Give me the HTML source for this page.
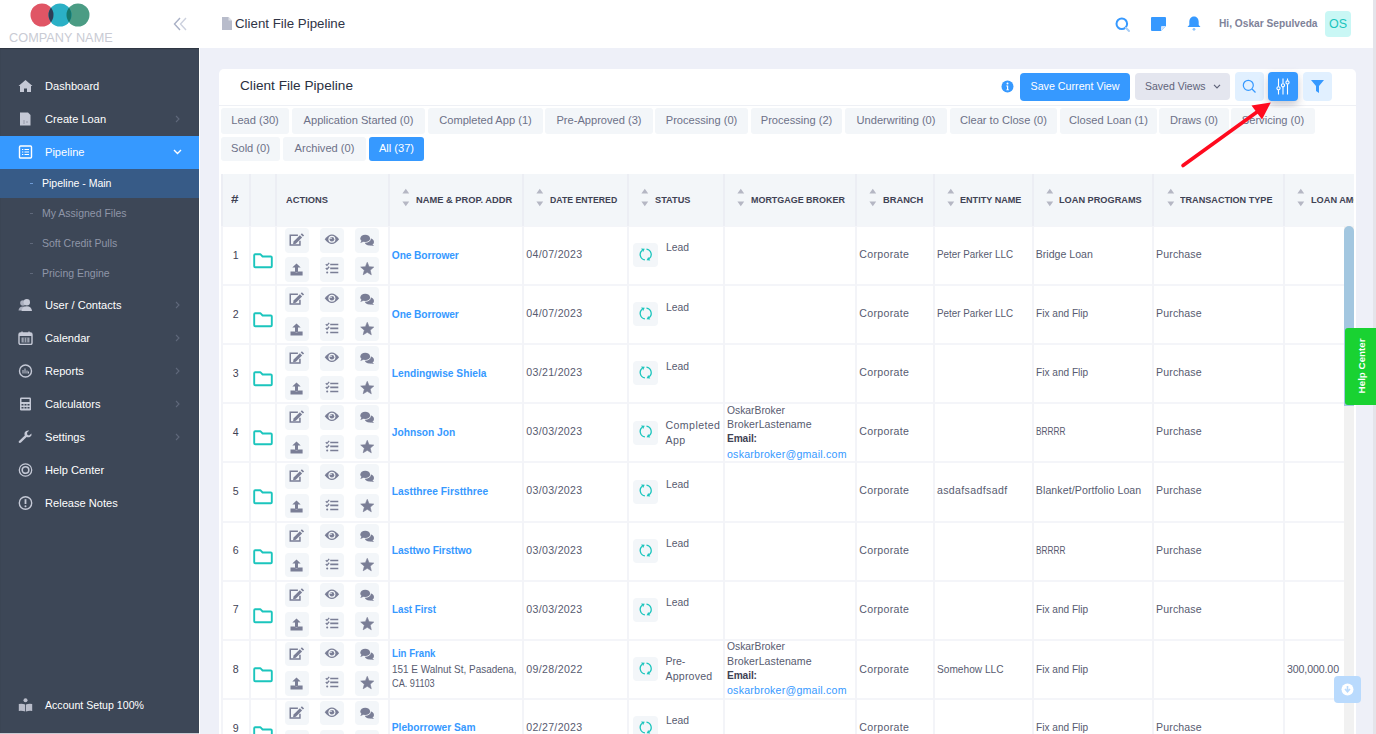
<!DOCTYPE html><html><head><meta charset="utf-8"><style>
*{box-sizing:border-box;margin:0;padding:0}
html,body{width:1376px;height:734px;overflow:hidden;background:#eef0f8;font-family:"Liberation Sans",sans-serif}
.abs{position:absolute}
.t{position:absolute;white-space:nowrap;line-height:1}
svg{display:block}
</style></head><body>
<div class="abs" style="left:0;top:0;width:1376px;height:48px;background:#fff"></div>
<svg class="abs" style="left:0;top:0" width="130" height="48" viewBox="0 0 130 48">
<defs><clipPath id="cr"><circle cx="42" cy="15" r="11.5"/></clipPath><clipPath id="cg"><circle cx="78" cy="15" r="11.5"/></clipPath></defs>
<circle cx="42" cy="15" r="11.5" fill="#e05565"/>
<circle cx="78" cy="15" r="11.5" fill="#4b9c84"/>
<circle cx="60" cy="15" r="11.5" fill="#2bb0c6"/>
<circle cx="60" cy="15" r="11.5" fill="#2e3c55" clip-path="url(#cr)"/>
<circle cx="60" cy="15" r="11.5" fill="#17786c" clip-path="url(#cg)"/>
</svg>
<div class="t" style="left:9px;top:32.2px;font-size:12.7px;color:#c9cbd4;letter-spacing:0.05px">COMPANY NAME</div>
<svg class="abs" style="left:173px;top:17px" width="16" height="14" viewBox="0 0 16 14">
<path d="M7 1 L1.5 7 L7 13" fill="none" stroke="#a9b0c6" stroke-width="1.4"/>
<path d="M13 1 L7.5 7 L13 13" fill="none" stroke="#ccd1de" stroke-width="1.4"/></svg>
<svg class="abs" style="left:222px;top:17px" width="10" height="13" viewBox="0 0 10 13">
<path d="M0 0 H6.5 L10 3.5 V13 H0 Z" fill="#b8bccb"/><path d="M6.5 0 V3.5 H10" fill="#dfe1e8"/></svg>
<div class="t" style="left:235px;top:17px;font-size:13.3px;color:#2f3446">Client File Pipeline</div>
<svg class="abs" style="left:1115px;top:17px" width="16" height="16" viewBox="0 0 16 16">
<circle cx="6.8" cy="6.8" r="5.3" fill="none" stroke="#3699ff" stroke-width="2"/>
<path d="M10.8 10.8 L14 14" stroke="#a8cdf5" stroke-width="2" stroke-linecap="round"/></svg>
<svg class="abs" style="left:1151px;top:17px" width="15" height="14" viewBox="0 0 15 14">
<path d="M1 0 H14 Q15 0 15 1 V9 L10 14 H1 Q0 14 0 13 V1 Q0 0 1 0 Z" fill="#3699ff"/>
<path d="M15 9 H11 Q10 9 10 10 V14 Z" fill="#cfe5ff"/></svg>
<svg class="abs" style="left:1187px;top:16px" width="14" height="15" viewBox="0 0 14 15">
<path d="M7 0.5 C3.8 0.5 2.3 3 2.3 6 V9 L0.5 11 H13.5 L11.7 9 V6 C11.7 3 10.2 0.5 7 0.5 Z" fill="#3699ff"/>
<circle cx="7" cy="13.3" r="1.4" fill="#8cc2fb"/></svg>
<div class="t" style="left:1219px;top:19px;font-size:10.2px;font-weight:bold;color:#7e8299">Hi, Oskar Sepulveda</div>
<div class="abs" style="left:1325px;top:11px;width:26px;height:26px;border-radius:4px;background:#c9f7f5"></div>
<div class="t" style="left:1325px;top:18px;width:26px;text-align:center;font-size:12.5px;color:#1bc5bd">OS</div>
<div class="abs" style="left:1373px;top:0;width:3px;height:734px;background:#e4e4ea"></div>
<div class="abs" style="left:0;top:48px;width:199px;height:685px;background:#3d4757;box-shadow:inset 0 1px 1px rgba(0,0,0,.25)"></div>
<div class="abs" style="left:199px;top:48px;width:1px;height:686px;background:#ffffff"></div>
<div class="abs" style="left:0;top:733px;width:199px;height:1px;background:#c9cbd3"></div>
<div class="abs" style="left:0;top:136px;width:199px;height:33px;background:#3699ff"></div>
<div class="abs" style="left:0;top:169px;width:199px;height:29px;background:#375b87"></div>
<div class="t" style="left:45px;top:80.7px;font-size:11.1px;color:#ffffff">Dashboard</div>
<svg class="abs" style="left:18px;top:79px" width="15" height="14" viewBox="0 0 15 14"><path d="M7.5 1 L0.5 7 L2 7 L2 13 H6 V9.5 H9 V13 H13 V7 L14.5 7 Z" fill="#c5c9d6"/></svg>
<div class="t" style="left:45px;top:113.7px;font-size:11.1px;color:#ffffff">Create Loan</div>
<svg class="abs" style="left:18px;top:112px" width="15" height="14" viewBox="0 0 15 14"><path d="M2 0.5 H10 L12.5 3 V13.5 H2 Z" fill="#c5c9d6"/><path d="M5 9 h2 M5 11 h2 M8 10 h2" stroke="#8a90a0" stroke-width="0.8"/></svg>
<svg class="abs" style="left:175px;top:115px" width="5" height="8" viewBox="0 0 5 8"><path d="M1 1 L4 4 L1 7" fill="none" stroke="#5f687a" stroke-width="1.1"/></svg>
<div class="t" style="left:45px;top:146.7px;font-size:11.1px;color:#ffffff">Pipeline</div>
<svg class="abs" style="left:18px;top:145px" width="15" height="14" viewBox="0 0 15 14"><rect x="1.5" y="1" width="12" height="12" rx="1" fill="none" stroke="#fff" stroke-width="1.4"/><path d="M4 4.5 h1.3 M6.5 4.5 h4.5 M4 7 h1.3 M6.5 7 h4.5 M4 9.5 h1.3 M6.5 9.5 h4.5" stroke="#fff" stroke-width="1.1"/></svg>
<svg class="abs" style="left:173px;top:149px" width="9" height="6" viewBox="0 0 9 6"><path d="M1 1 L4.5 4.5 L8 1" fill="none" stroke="#fff" stroke-width="1.4"/></svg>
<div class="abs" style="left:30px;top:183px;width:3px;height:1px;background:#6f9bd6"></div>
<div class="t" style="left:42px;top:177.7px;font-size:10.5px;color:#ffffff">Pipeline - Main</div>
<div class="abs" style="left:30px;top:213px;width:3px;height:1px;background:#5f687a"></div>
<div class="t" style="left:42px;top:207.7px;font-size:10.5px;color:#8f96a8">My Assigned Files</div>
<div class="abs" style="left:30px;top:243px;width:3px;height:1px;background:#5f687a"></div>
<div class="t" style="left:42px;top:237.7px;font-size:10.5px;color:#8f96a8">Soft Credit Pulls</div>
<div class="abs" style="left:30px;top:273px;width:3px;height:1px;background:#5f687a"></div>
<div class="t" style="left:42px;top:267.7px;font-size:10.5px;color:#8f96a8">Pricing Engine</div>
<div class="t" style="left:45px;top:299.7px;font-size:11.1px;color:#ffffff">User / Contacts</div>
<svg class="abs" style="left:18px;top:298px" width="15" height="14" viewBox="0 0 15 14"><circle cx="5" cy="5" r="2.8" fill="#a9aebd"/><path d="M0.5 12.5 Q1 8.5 5 8.5 Q9 8.5 9.5 12.5 Z" fill="#a9aebd"/><circle cx="8.8" cy="4.3" r="3.2" fill="#c5c9d6"/><path d="M3.5 13 Q4 8.3 8.8 8.3 Q13.6 8.3 14 13 Z" fill="#c5c9d6"/></svg>
<svg class="abs" style="left:175px;top:301px" width="5" height="8" viewBox="0 0 5 8"><path d="M1 1 L4 4 L1 7" fill="none" stroke="#5f687a" stroke-width="1.1"/></svg>
<div class="t" style="left:45px;top:332.7px;font-size:11.1px;color:#ffffff">Calendar</div>
<svg class="abs" style="left:18px;top:331px" width="15" height="14" viewBox="0 0 15 14"><rect x="1" y="2" width="13" height="11.5" rx="1.5" fill="none" stroke="#c5c9d6" stroke-width="1.4"/><rect x="1" y="2" width="13" height="3" fill="#c5c9d6"/><path d="M4 0.5 v3 M11 0.5 v3" stroke="#c5c9d6" stroke-width="1.3"/><path d="M3.5 6.5 h8 v5 h-8 z" fill="#c5c9d6" opacity=".7"/><path d="M6.2 6.5 v5 M8.8 6.5 v5" stroke="#3d4757" stroke-width="0.9"/></svg>
<svg class="abs" style="left:175px;top:334px" width="5" height="8" viewBox="0 0 5 8"><path d="M1 1 L4 4 L1 7" fill="none" stroke="#5f687a" stroke-width="1.1"/></svg>
<div class="t" style="left:45px;top:365.7px;font-size:11.1px;color:#ffffff">Reports</div>
<svg class="abs" style="left:18px;top:364px" width="15" height="14" viewBox="0 0 15 14"><circle cx="7.5" cy="7" r="6" fill="none" stroke="#c5c9d6" stroke-width="1.4"/><path d="M5 9.5 V6 M7 9.5 V4.5 M9 9.5 V6.5 M10.5 9.5 V7.5" stroke="#c5c9d6" stroke-width="1"/></svg>
<svg class="abs" style="left:175px;top:367px" width="5" height="8" viewBox="0 0 5 8"><path d="M1 1 L4 4 L1 7" fill="none" stroke="#5f687a" stroke-width="1.1"/></svg>
<div class="t" style="left:45px;top:398.7px;font-size:11.1px;color:#ffffff">Calculators</div>
<svg class="abs" style="left:18px;top:397px" width="15" height="14" viewBox="0 0 15 14"><rect x="2" y="0.5" width="11" height="13" rx="1.2" fill="#c5c9d6"/><rect x="3.5" y="2" width="8" height="3" fill="#3d4757"/><path d="M3.5 7 h2 v1.6 h-2z M6.5 7 h2 v1.6 h-2z M9.5 7 h2 v1.6 h-2z M3.5 10 h2 v1.6 h-2z M6.5 10 h2 v1.6 h-2z M9.5 10 h2 v1.6 h-2z" fill="#3d4757"/></svg>
<svg class="abs" style="left:175px;top:400px" width="5" height="8" viewBox="0 0 5 8"><path d="M1 1 L4 4 L1 7" fill="none" stroke="#5f687a" stroke-width="1.1"/></svg>
<div class="t" style="left:45px;top:431.7px;font-size:11.1px;color:#ffffff">Settings</div>
<svg class="abs" style="left:18px;top:430px" width="15" height="14" viewBox="0 0 15 14"><path d="M13.5 3.5 L11 5.5 L9.3 4.7 L9 2.8 L11.2 0.5 Q8 0 6.8 2.3 Q6 4 6.8 5.6 L0.8 11.3 Q0.2 12.5 1.5 13 Q2.3 13.3 3 12.6 L8.6 7 Q10.5 7.8 12.2 6.8 Q14 5.7 13.5 3.5 Z" fill="#c5c9d6"/></svg>
<svg class="abs" style="left:175px;top:433px" width="5" height="8" viewBox="0 0 5 8"><path d="M1 1 L4 4 L1 7" fill="none" stroke="#5f687a" stroke-width="1.1"/></svg>
<div class="t" style="left:45px;top:464.7px;font-size:11.1px;color:#ffffff">Help Center</div>
<svg class="abs" style="left:18px;top:463px" width="15" height="14" viewBox="0 0 15 14"><circle cx="7.5" cy="7" r="6.2" fill="none" stroke="#c5c9d6" stroke-width="1.3"/><circle cx="7.5" cy="7" r="3.3" fill="none" stroke="#c5c9d6" stroke-width="1.6"/></svg>
<div class="t" style="left:45px;top:497.7px;font-size:11.1px;color:#ffffff">Release Notes</div>
<svg class="abs" style="left:18px;top:496px" width="15" height="14" viewBox="0 0 15 14"><circle cx="7.5" cy="7" r="6.2" fill="none" stroke="#c5c9d6" stroke-width="1.4"/><path d="M7.5 3.2 V8" stroke="#c5c9d6" stroke-width="1.8"/><circle cx="7.5" cy="10.2" r="1" fill="#c5c9d6"/></svg>
<div class="t" style="left:45px;top:699.7px;font-size:10.6px;color:#ffffff">Account Setup 100%</div>
<svg class="abs" style="left:18px;top:698px" width="15" height="14" viewBox="0 0 15 14"><circle cx="7.5" cy="2.3" r="2" fill="#b9bdca"/><path d="M0.8 6 Q4 5.2 7.2 6.5 V13.5 Q4 12.5 0.8 13 Z M8 6.5 Q11 5.2 14.2 6 V13 Q11 12.5 8 13.5 Z" fill="#b9bdca"/></svg>
<div class="abs" style="left:219px;top:69px;width:1137px;height:670px;background:#fff;border-radius:5px"></div>
<div class="t" style="left:240px;top:79.3px;font-size:13.6px;color:#2a2f3f;letter-spacing:0.02px">Client File Pipeline</div>
<div class="abs" style="left:219px;top:105px;width:1137px;height:1px;background:#eef0f5"></div>
<svg class="abs" style="left:1001px;top:80px" width="13" height="13" viewBox="0 0 13 13">
<circle cx="6.5" cy="6.5" r="6" fill="#3699ff"/><circle cx="6.5" cy="3.6" r="1" fill="#fff"/><path d="M5.3 5.6 H7.2 V9.4 H8 V10.2 H5.2 V9.4 H6 V6.4 H5.3 Z" fill="#fff"/></svg>
<div class="abs" style="left:1020px;top:73px;width:110px;height:28px;background:#3699ff;border-radius:4px"></div>
<div class="t" style="left:1020px;top:81px;width:110px;text-align:center;font-size:10.7px;color:#fff">Save Current View</div>
<div class="abs" style="left:1135px;top:73px;width:95px;height:27px;background:#e4e6ef;border-radius:4px"></div>
<div class="t" style="left:1145px;top:81px;font-size:10.5px;color:#60647a">Saved Views</div>
<svg class="abs" style="left:1213px;top:84px" width="8" height="5" viewBox="0 0 8 5"><path d="M1 0.8 L4 3.8 L7 0.8" fill="none" stroke="#5e6278" stroke-width="1.2"/></svg>
<div class="abs" style="left:1235px;top:72px;width:29px;height:29px;background:#e1f0ff;border-radius:4px"></div>
<svg class="abs" style="left:1242px;top:79px" width="15" height="15" viewBox="0 0 15 15">
<circle cx="6.3" cy="6.3" r="5" fill="none" stroke="#3699ff" stroke-width="1.2"/><path d="M10 10 L13.5 13.5" stroke="#3699ff" stroke-width="1.3"/></svg>
<div class="abs" style="left:1268px;top:72px;width:30px;height:29px;background:#3699ff;border-radius:4px;box-shadow:0 4px 8px rgba(60,60,90,.28)"></div>
<svg class="abs" style="left:1276px;top:78px" width="14" height="17" viewBox="0 0 14 17">
<g stroke="#fff" stroke-width="1.1" fill="none">
<path d="M2.5 0.5 V8.5 M2.5 12 V16.5"/><circle cx="2.5" cy="10.3" r="1.6"/>
<path d="M7 0.5 V5.5 M7 9 V16.5"/><circle cx="7" cy="7.3" r="1.6"/>
<path d="M11.5 0.5 V2.8 M11.5 6.2 V16.5"/><circle cx="11.5" cy="4.5" r="1.6"/></g></svg>
<div class="abs" style="left:1303px;top:72px;width:29px;height:29px;background:#e1f0ff;border-radius:4px"></div>
<svg class="abs" style="left:1311px;top:80px" width="13" height="13" viewBox="0 0 13 13">
<path d="M0 0 H13 L8 6 V13 L5 11 V6 Z" fill="#3699ff"/></svg>
<div class="abs" style="left:221px;top:108px;width:68px;height:26px;background:#f3f6f9;border-radius:3px"></div>
<div class="t" style="left:221px;top:115.3px;width:68px;text-align:center;font-size:11.1px;color:#6d7188">Lead (30)</div>
<div class="abs" style="left:292px;top:108px;width:133px;height:26px;background:#f3f6f9;border-radius:3px"></div>
<div class="t" style="left:292px;top:115.3px;width:133px;text-align:center;font-size:11.1px;color:#6d7188">Application Started (0)</div>
<div class="abs" style="left:428px;top:108px;width:115px;height:26px;background:#f3f6f9;border-radius:3px"></div>
<div class="t" style="left:428px;top:115.3px;width:115px;text-align:center;font-size:11.1px;color:#6d7188">Completed App (1)</div>
<div class="abs" style="left:545px;top:108px;width:108px;height:26px;background:#f3f6f9;border-radius:3px"></div>
<div class="t" style="left:545px;top:115.3px;width:108px;text-align:center;font-size:11.1px;color:#6d7188">Pre-Approved (3)</div>
<div class="abs" style="left:655px;top:108px;width:93px;height:26px;background:#f3f6f9;border-radius:3px"></div>
<div class="t" style="left:655px;top:115.3px;width:93px;text-align:center;font-size:11.1px;color:#6d7188">Processing (0)</div>
<div class="abs" style="left:751px;top:108px;width:91px;height:26px;background:#f3f6f9;border-radius:3px"></div>
<div class="t" style="left:751px;top:115.3px;width:91px;text-align:center;font-size:11.1px;color:#6d7188">Processing (2)</div>
<div class="abs" style="left:845px;top:108px;width:102px;height:26px;background:#f3f6f9;border-radius:3px"></div>
<div class="t" style="left:845px;top:115.3px;width:102px;text-align:center;font-size:11.1px;color:#6d7188">Underwriting (0)</div>
<div class="abs" style="left:950px;top:108px;width:107px;height:26px;background:#f3f6f9;border-radius:3px"></div>
<div class="t" style="left:950px;top:115.3px;width:107px;text-align:center;font-size:11.1px;color:#6d7188">Clear to Close (0)</div>
<div class="abs" style="left:1060px;top:108px;width:97px;height:26px;background:#f3f6f9;border-radius:3px"></div>
<div class="t" style="left:1060px;top:115.3px;width:97px;text-align:center;font-size:11.1px;color:#6d7188">Closed Loan (1)</div>
<div class="abs" style="left:1159px;top:108px;width:70px;height:26px;background:#f3f6f9;border-radius:3px"></div>
<div class="t" style="left:1159px;top:115.3px;width:70px;text-align:center;font-size:11.1px;color:#6d7188">Draws (0)</div>
<div class="abs" style="left:1231px;top:108px;width:84px;height:26px;background:#f3f6f9;border-radius:3px"></div>
<div class="t" style="left:1231px;top:115.3px;width:84px;text-align:center;font-size:11.1px;color:#6d7188">Servicing (0)</div>
<div class="abs" style="left:221px;top:137px;width:59px;height:24px;background:#f3f6f9;border-radius:3px"></div>
<div class="t" style="left:221px;top:143.3px;width:59px;text-align:center;font-size:11.1px;color:#6d7188">Sold (0)</div>
<div class="abs" style="left:283px;top:137px;width:83px;height:24px;background:#f3f6f9;border-radius:3px"></div>
<div class="t" style="left:283px;top:143.3px;width:83px;text-align:center;font-size:11.1px;color:#6d7188">Archived (0)</div>
<div class="abs" style="left:369px;top:137px;width:55px;height:24px;background:#3699ff;border-radius:3px"></div>
<div class="t" style="left:369px;top:143.3px;width:55px;text-align:center;font-size:11.1px;color:#fff">All (37)</div>
<div class="abs" style="left:221px;top:174px;width:1133px;height:560px;overflow:hidden">
<div class="abs" style="left:0;top:0;width:1133px;height:52px;background:#f3f6f9;border-radius:4px 0 0 0"></div>
<div class="abs" style="left:0;top:110px;width:1123px;height:2px;background:#f4f5f9"></div>
<div class="abs" style="left:0;top:169px;width:1123px;height:2px;background:#f4f5f9"></div>
<div class="abs" style="left:0;top:228px;width:1123px;height:2px;background:#f4f5f9"></div>
<div class="abs" style="left:0;top:287px;width:1123px;height:2px;background:#f4f5f9"></div>
<div class="abs" style="left:0;top:347px;width:1123px;height:2px;background:#f4f5f9"></div>
<div class="abs" style="left:0;top:406px;width:1123px;height:2px;background:#f4f5f9"></div>
<div class="abs" style="left:0;top:465px;width:1123px;height:2px;background:#f4f5f9"></div>
<div class="abs" style="left:0;top:524px;width:1123px;height:2px;background:#f4f5f9"></div>
<div class="abs" style="left:0;top:52px;width:1123px;height:1px;background:#f4f5f9"></div>
<div class="abs" style="left:0px;top:0;width:2px;height:560px;background:#f3f4f8"></div>
<div class="abs" style="left:0px;top:0;width:2px;height:52px;background:#eceef4"></div>
<div class="abs" style="left:28px;top:0;width:2px;height:560px;background:#f3f4f8"></div>
<div class="abs" style="left:28px;top:0;width:2px;height:52px;background:#eceef4"></div>
<div class="abs" style="left:54px;top:0;width:2px;height:560px;background:#f3f4f8"></div>
<div class="abs" style="left:54px;top:0;width:2px;height:52px;background:#eceef4"></div>
<div class="abs" style="left:167px;top:0;width:2px;height:560px;background:#f3f4f8"></div>
<div class="abs" style="left:167px;top:0;width:2px;height:52px;background:#eceef4"></div>
<div class="abs" style="left:301px;top:0;width:2px;height:560px;background:#f3f4f8"></div>
<div class="abs" style="left:301px;top:0;width:2px;height:52px;background:#eceef4"></div>
<div class="abs" style="left:406px;top:0;width:2px;height:560px;background:#f3f4f8"></div>
<div class="abs" style="left:406px;top:0;width:2px;height:52px;background:#eceef4"></div>
<div class="abs" style="left:502px;top:0;width:2px;height:560px;background:#f3f4f8"></div>
<div class="abs" style="left:502px;top:0;width:2px;height:52px;background:#eceef4"></div>
<div class="abs" style="left:634px;top:0;width:2px;height:560px;background:#f3f4f8"></div>
<div class="abs" style="left:634px;top:0;width:2px;height:52px;background:#eceef4"></div>
<div class="abs" style="left:712px;top:0;width:2px;height:560px;background:#f3f4f8"></div>
<div class="abs" style="left:712px;top:0;width:2px;height:52px;background:#eceef4"></div>
<div class="abs" style="left:811px;top:0;width:2px;height:560px;background:#f3f4f8"></div>
<div class="abs" style="left:811px;top:0;width:2px;height:52px;background:#eceef4"></div>
<div class="abs" style="left:931px;top:0;width:2px;height:560px;background:#f3f4f8"></div>
<div class="abs" style="left:931px;top:0;width:2px;height:52px;background:#eceef4"></div>
<div class="abs" style="left:1062px;top:0;width:2px;height:560px;background:#f3f4f8"></div>
<div class="abs" style="left:1062px;top:0;width:2px;height:52px;background:#eceef4"></div>
<div class="t" style="left:9.800000000000011px;top:20.80px;font-size:10.4px;transform:scaleX(1.3);transform-origin:0 0;color:#3f4254;font-weight:bold">#</div>
<div class="t" style="left:65px;top:20.82px;font-size:9.9px;transform:scaleX(0.944);transform-origin:0 0;color:#3f4254;font-weight:bold">ACTIONS</div>
<svg class="abs" style="left:181.2px;top:14px" width="8" height="19" viewBox="0 0 8 19"><path d="M0.4 5.6 L3.8 0.7 L7.2 5.6 Z M0.4 13.4 L3.8 18.2 L7.2 13.4 Z" fill="#b5b7c4"/></svg>
<div class="t" style="left:194.6px;top:20.82px;font-size:9.9px;transform:scaleX(0.942);transform-origin:0 0;color:#3f4254;font-weight:bold">NAME &amp; PROP. ADDR</div>
<svg class="abs" style="left:315.3px;top:14px" width="8" height="19" viewBox="0 0 8 19"><path d="M0.4 5.6 L3.8 0.7 L7.2 5.6 Z M0.4 13.4 L3.8 18.2 L7.2 13.4 Z" fill="#b5b7c4"/></svg>
<div class="t" style="left:328.7px;top:20.82px;font-size:9.9px;transform:scaleX(0.883);transform-origin:0 0;color:#3f4254;font-weight:bold">DATE ENTERED</div>
<svg class="abs" style="left:420.4px;top:14px" width="8" height="19" viewBox="0 0 8 19"><path d="M0.4 5.6 L3.8 0.7 L7.2 5.6 Z M0.4 13.4 L3.8 18.2 L7.2 13.4 Z" fill="#b5b7c4"/></svg>
<div class="t" style="left:433.8px;top:20.82px;font-size:9.9px;transform:scaleX(0.932);transform-origin:0 0;color:#3f4254;font-weight:bold">STATUS</div>
<svg class="abs" style="left:516.2px;top:14px" width="8" height="19" viewBox="0 0 8 19"><path d="M0.4 5.6 L3.8 0.7 L7.2 5.6 Z M0.4 13.4 L3.8 18.2 L7.2 13.4 Z" fill="#b5b7c4"/></svg>
<div class="t" style="left:529.6px;top:20.82px;font-size:9.9px;transform:scaleX(0.905);transform-origin:0 0;color:#3f4254;font-weight:bold">MORTGAGE BROKER</div>
<svg class="abs" style="left:648.3px;top:14px" width="8" height="19" viewBox="0 0 8 19"><path d="M0.4 5.6 L3.8 0.7 L7.2 5.6 Z M0.4 13.4 L3.8 18.2 L7.2 13.4 Z" fill="#b5b7c4"/></svg>
<div class="t" style="left:661.7px;top:20.82px;font-size:9.9px;transform:scaleX(0.941);transform-origin:0 0;color:#3f4254;font-weight:bold">BRANCH</div>
<svg class="abs" style="left:726.0px;top:14px" width="8" height="19" viewBox="0 0 8 19"><path d="M0.4 5.6 L3.8 0.7 L7.2 5.6 Z M0.4 13.4 L3.8 18.2 L7.2 13.4 Z" fill="#b5b7c4"/></svg>
<div class="t" style="left:739.4px;top:20.82px;font-size:9.9px;transform:scaleX(0.920);transform-origin:0 0;color:#3f4254;font-weight:bold">ENTITY NAME</div>
<svg class="abs" style="left:825.0px;top:14px" width="8" height="19" viewBox="0 0 8 19"><path d="M0.4 5.6 L3.8 0.7 L7.2 5.6 Z M0.4 13.4 L3.8 18.2 L7.2 13.4 Z" fill="#b5b7c4"/></svg>
<div class="t" style="left:838.4px;top:20.82px;font-size:9.9px;transform:scaleX(0.931);transform-origin:0 0;color:#3f4254;font-weight:bold">LOAN PROGRAMS</div>
<svg class="abs" style="left:945.5px;top:14px" width="8" height="19" viewBox="0 0 8 19"><path d="M0.4 5.6 L3.8 0.7 L7.2 5.6 Z M0.4 13.4 L3.8 18.2 L7.2 13.4 Z" fill="#b5b7c4"/></svg>
<div class="t" style="left:958.9px;top:20.82px;font-size:9.9px;transform:scaleX(0.921);transform-origin:0 0;color:#3f4254;font-weight:bold">TRANSACTION TYPE</div>
<svg class="abs" style="left:1076.2px;top:14px" width="8" height="19" viewBox="0 0 8 19"><path d="M0.4 5.6 L3.8 0.7 L7.2 5.6 Z M0.4 13.4 L3.8 18.2 L7.2 13.4 Z" fill="#b5b7c4"/></svg>
<div class="t" style="left:1089.6px;top:20.82px;font-size:9.9px;transform:scaleX(0.930);transform-origin:0 0;color:#3f4254;font-weight:bold">LOAN AMOUNT</div>
<div class="t" style="left:11.8px;top:75.83px;font-size:10.6px;color:#3f4254;">1</div>
<svg class="abs" style="left:31px;top:78.0px" width="22" height="17" viewBox="0 0 22 17"><path d="M2.2 3.2 Q2.2 2.2 3.2 2.2 H8.3 L10.6 4.5 H18.8 Q19.8 4.5 19.8 5.5 V14.2 Q19.8 15.2 18.8 15.2 H3.2 Q2.2 15.2 2.2 14.2 Z" fill="none" stroke="#1bc5bd" stroke-width="1.9" stroke-linejoin="round"/></svg>
<div class="abs" style="left:64px;top:54.0px;width:24px;height:24.5px;background:#f3f6f9;border-radius:4px"></div>
<svg class="abs" style="left:64px;top:54.0px" width="24" height="25" viewBox="0 0 24 25"><g transform="translate(3,4)"><path d="M9.9 3.35 H2.25 V12.95 H11.95 V8.7" fill="none" stroke="#7a7e96" stroke-width="1.5"/><path d="M5.0 12.2 L5.6 9.5 L11.9 3.2 L14.1 5.4 L7.8 11.7 Z" fill="#7a7e96"/><path d="M12.7 2.4 L13.9 1.2 L16.1 3.4 L14.9 4.6 Z" fill="#7a7e96"/></g></svg>
<div class="abs" style="left:99px;top:54.0px;width:24px;height:24.5px;background:#f3f6f9;border-radius:4px"></div>
<svg class="abs" style="left:99px;top:54.0px" width="24" height="25" viewBox="0 0 24 25"><g transform="translate(2,2)"><path d="M2.7 9.3 Q9.9 -0.2 17.1 9.3 Q9.9 18.8 2.7 9.3 Z" fill="#7a7e96"/><circle cx="9.9" cy="9.3" r="3.5" fill="#f3f6f9"/><circle cx="9.9" cy="9.3" r="2.3" fill="#7a7e96"/><circle cx="9.0" cy="8.3" r="0.8" fill="#f3f6f9"/></g></svg>
<div class="abs" style="left:134px;top:54.0px;width:24px;height:24.5px;background:#f3f6f9;border-radius:4px"></div>
<svg class="abs" style="left:134px;top:54.0px" width="24" height="25" viewBox="0 0 24 25"><g transform="translate(2,2)"><ellipse cx="12.4" cy="11.9" rx="4.6" ry="3.7" fill="#7a7e96"/><path d="M15 14 L17.1 15.9 L12.8 15.2 Z" fill="#7a7e96"/><ellipse cx="8.2" cy="8.4" rx="5.7" ry="4.4" fill="#f3f6f9"/><ellipse cx="8.2" cy="8.4" rx="4.9" ry="3.6" fill="#7a7e96"/><path d="M4.6 10.6 L3.3 12.9 L6.6 11.7 Z" fill="#7a7e96"/></g></svg>
<div class="abs" style="left:64px;top:83.4px;width:24px;height:24.5px;background:#f3f6f9;border-radius:4px"></div>
<svg class="abs" style="left:64px;top:83.4px" width="24" height="25" viewBox="0 0 24 25"><g transform="translate(1,1.6)"><path d="M10.5 4.8 L14.7 8.8 H12 V13.2 Q10.5 14.3 9 13.2 V8.8 H6.3 Z" fill="#7a7e96"/><path d="M4.5 12.9 H8.6 Q10.5 15 12.4 12.9 H16.6 V16.8 H4.5 Z" fill="#7a7e96"/></g></svg>
<div class="abs" style="left:99px;top:83.4px;width:24px;height:24.5px;background:#f3f6f9;border-radius:4px"></div>
<svg class="abs" style="left:99px;top:83.4px" width="24" height="25" viewBox="0 0 24 25"><g transform="translate(2,1.6)"><path d="M3.8 5.6 L5 6.8 L7.2 4.3 M3.8 9.4 L5 10.6 L7.2 8.1" fill="none" stroke="#7a7e96" stroke-width="1.3"/><circle cx="5.2" cy="13.9" r="1.05" fill="#7a7e96"/><path d="M8.2 5.9 H16.3 M8.2 9.8 H16.3 M8.2 13.9 H16.3" stroke="#7a7e96" stroke-width="1.6"/></g></svg>
<div class="abs" style="left:134px;top:83.4px;width:24px;height:24.5px;background:#f3f6f9;border-radius:4px"></div>
<svg class="abs" style="left:134px;top:83.4px" width="24" height="25" viewBox="0 0 24 25"><g transform="translate(2,1.6)"><path d="M10.25 3.70 L12.07 8.09 L16.81 8.47 L13.20 11.56 L14.31 16.18 L10.25 13.70 L6.19 16.18 L7.30 11.56 L3.69 8.47 L8.43 8.09 Z" fill="#7a7e96" stroke="#7a7e96" stroke-width="0.6" stroke-linejoin="round"/></g></svg>
<div class="t" style="left:170.8px;top:76.57px;font-size:10.2px;color:#3699ff;font-weight:bold;letter-spacing:-0.085px;">One Borrower</div>
<div class="t" style="left:305.2px;top:75.03px;font-size:10.6px;color:#575b70;letter-spacing:0.333px;">04/07/2023</div>
<div class="abs" style="left:412px;top:69.2px;width:25px;height:24px;background:#f3f6f9;border-radius:4px"></div>
<svg class="abs" style="left:417px;top:73.0px" width="16" height="16" viewBox="0 0 16 16"><path d="M6.93 12.95 A5.5 5.5 0 0 1 4.31 3.17" fill="none" stroke="#1bc5bd" stroke-width="1.3"/><path d="M6.77 1.69 L3.17 1.45 L5.17 4.92 Z" fill="#1bc5bd"/><path d="M8.47 2.05 A5.5 5.5 0 0 1 11.09 11.83" fill="none" stroke="#1bc5bd" stroke-width="1.3"/><path d="M8.63 13.31 L12.23 13.55 L10.23 10.08 Z" fill="#1bc5bd"/></svg>
<div class="t" style="left:444.5px;top:68.43px;font-size:10.6px;color:#575b70;transform:scaleX(0.976);transform-origin:0 0;">Lead</div>
<div class="t" style="left:638.2px;top:75.03px;font-size:10.6px;color:#575b70;letter-spacing:0.324px;">Corporate</div>
<div class="t" style="left:715.9px;top:75.03px;font-size:10.6px;color:#575b70;transform:scaleX(0.929);transform-origin:0 0;">Peter Parker LLC</div>
<div class="t" style="left:814.8px;top:75.03px;font-size:10.6px;color:#575b70;letter-spacing:-0.013px;">Bridge Loan</div>
<div class="t" style="left:935.1px;top:75.03px;font-size:10.6px;color:#575b70;letter-spacing:0.107px;">Purchase</div>
<div class="t" style="left:11.8px;top:134.93px;font-size:10.6px;color:#3f4254;">2</div>
<svg class="abs" style="left:31px;top:137.1px" width="22" height="17" viewBox="0 0 22 17"><path d="M2.2 3.2 Q2.2 2.2 3.2 2.2 H8.3 L10.6 4.5 H18.8 Q19.8 4.5 19.8 5.5 V14.2 Q19.8 15.2 18.8 15.2 H3.2 Q2.2 15.2 2.2 14.2 Z" fill="none" stroke="#1bc5bd" stroke-width="1.9" stroke-linejoin="round"/></svg>
<div class="abs" style="left:64px;top:113.1px;width:24px;height:24.5px;background:#f3f6f9;border-radius:4px"></div>
<svg class="abs" style="left:64px;top:113.1px" width="24" height="25" viewBox="0 0 24 25"><g transform="translate(3,4)"><path d="M9.9 3.35 H2.25 V12.95 H11.95 V8.7" fill="none" stroke="#7a7e96" stroke-width="1.5"/><path d="M5.0 12.2 L5.6 9.5 L11.9 3.2 L14.1 5.4 L7.8 11.7 Z" fill="#7a7e96"/><path d="M12.7 2.4 L13.9 1.2 L16.1 3.4 L14.9 4.6 Z" fill="#7a7e96"/></g></svg>
<div class="abs" style="left:99px;top:113.1px;width:24px;height:24.5px;background:#f3f6f9;border-radius:4px"></div>
<svg class="abs" style="left:99px;top:113.1px" width="24" height="25" viewBox="0 0 24 25"><g transform="translate(2,2)"><path d="M2.7 9.3 Q9.9 -0.2 17.1 9.3 Q9.9 18.8 2.7 9.3 Z" fill="#7a7e96"/><circle cx="9.9" cy="9.3" r="3.5" fill="#f3f6f9"/><circle cx="9.9" cy="9.3" r="2.3" fill="#7a7e96"/><circle cx="9.0" cy="8.3" r="0.8" fill="#f3f6f9"/></g></svg>
<div class="abs" style="left:134px;top:113.1px;width:24px;height:24.5px;background:#f3f6f9;border-radius:4px"></div>
<svg class="abs" style="left:134px;top:113.1px" width="24" height="25" viewBox="0 0 24 25"><g transform="translate(2,2)"><ellipse cx="12.4" cy="11.9" rx="4.6" ry="3.7" fill="#7a7e96"/><path d="M15 14 L17.1 15.9 L12.8 15.2 Z" fill="#7a7e96"/><ellipse cx="8.2" cy="8.4" rx="5.7" ry="4.4" fill="#f3f6f9"/><ellipse cx="8.2" cy="8.4" rx="4.9" ry="3.6" fill="#7a7e96"/><path d="M4.6 10.6 L3.3 12.9 L6.6 11.7 Z" fill="#7a7e96"/></g></svg>
<div class="abs" style="left:64px;top:142.5px;width:24px;height:24.5px;background:#f3f6f9;border-radius:4px"></div>
<svg class="abs" style="left:64px;top:142.5px" width="24" height="25" viewBox="0 0 24 25"><g transform="translate(1,1.6)"><path d="M10.5 4.8 L14.7 8.8 H12 V13.2 Q10.5 14.3 9 13.2 V8.8 H6.3 Z" fill="#7a7e96"/><path d="M4.5 12.9 H8.6 Q10.5 15 12.4 12.9 H16.6 V16.8 H4.5 Z" fill="#7a7e96"/></g></svg>
<div class="abs" style="left:99px;top:142.5px;width:24px;height:24.5px;background:#f3f6f9;border-radius:4px"></div>
<svg class="abs" style="left:99px;top:142.5px" width="24" height="25" viewBox="0 0 24 25"><g transform="translate(2,1.6)"><path d="M3.8 5.6 L5 6.8 L7.2 4.3 M3.8 9.4 L5 10.6 L7.2 8.1" fill="none" stroke="#7a7e96" stroke-width="1.3"/><circle cx="5.2" cy="13.9" r="1.05" fill="#7a7e96"/><path d="M8.2 5.9 H16.3 M8.2 9.8 H16.3 M8.2 13.9 H16.3" stroke="#7a7e96" stroke-width="1.6"/></g></svg>
<div class="abs" style="left:134px;top:142.5px;width:24px;height:24.5px;background:#f3f6f9;border-radius:4px"></div>
<svg class="abs" style="left:134px;top:142.5px" width="24" height="25" viewBox="0 0 24 25"><g transform="translate(2,1.6)"><path d="M10.25 3.70 L12.07 8.09 L16.81 8.47 L13.20 11.56 L14.31 16.18 L10.25 13.70 L6.19 16.18 L7.30 11.56 L3.69 8.47 L8.43 8.09 Z" fill="#7a7e96" stroke="#7a7e96" stroke-width="0.6" stroke-linejoin="round"/></g></svg>
<div class="t" style="left:170.8px;top:135.67px;font-size:10.2px;color:#3699ff;font-weight:bold;letter-spacing:-0.085px;">One Borrower</div>
<div class="t" style="left:305.2px;top:134.13px;font-size:10.6px;color:#575b70;letter-spacing:0.333px;">04/07/2023</div>
<div class="abs" style="left:412px;top:128.3px;width:25px;height:24px;background:#f3f6f9;border-radius:4px"></div>
<svg class="abs" style="left:417px;top:132.1px" width="16" height="16" viewBox="0 0 16 16"><path d="M6.93 12.95 A5.5 5.5 0 0 1 4.31 3.17" fill="none" stroke="#1bc5bd" stroke-width="1.3"/><path d="M6.77 1.69 L3.17 1.45 L5.17 4.92 Z" fill="#1bc5bd"/><path d="M8.47 2.05 A5.5 5.5 0 0 1 11.09 11.83" fill="none" stroke="#1bc5bd" stroke-width="1.3"/><path d="M8.63 13.31 L12.23 13.55 L10.23 10.08 Z" fill="#1bc5bd"/></svg>
<div class="t" style="left:444.5px;top:127.53px;font-size:10.6px;color:#575b70;transform:scaleX(0.976);transform-origin:0 0;">Lead</div>
<div class="t" style="left:638.2px;top:134.13px;font-size:10.6px;color:#575b70;letter-spacing:0.324px;">Corporate</div>
<div class="t" style="left:715.9px;top:134.13px;font-size:10.6px;color:#575b70;transform:scaleX(0.929);transform-origin:0 0;">Peter Parker LLC</div>
<div class="t" style="left:814.8px;top:134.13px;font-size:10.6px;color:#575b70;transform:scaleX(0.953);transform-origin:0 0;">Fix and Flip</div>
<div class="t" style="left:935.1px;top:134.13px;font-size:10.6px;color:#575b70;letter-spacing:0.107px;">Purchase</div>
<div class="t" style="left:11.8px;top:194.03px;font-size:10.6px;color:#3f4254;">3</div>
<svg class="abs" style="left:31px;top:196.2px" width="22" height="17" viewBox="0 0 22 17"><path d="M2.2 3.2 Q2.2 2.2 3.2 2.2 H8.3 L10.6 4.5 H18.8 Q19.8 4.5 19.8 5.5 V14.2 Q19.8 15.2 18.8 15.2 H3.2 Q2.2 15.2 2.2 14.2 Z" fill="none" stroke="#1bc5bd" stroke-width="1.9" stroke-linejoin="round"/></svg>
<div class="abs" style="left:64px;top:172.2px;width:24px;height:24.5px;background:#f3f6f9;border-radius:4px"></div>
<svg class="abs" style="left:64px;top:172.2px" width="24" height="25" viewBox="0 0 24 25"><g transform="translate(3,4)"><path d="M9.9 3.35 H2.25 V12.95 H11.95 V8.7" fill="none" stroke="#7a7e96" stroke-width="1.5"/><path d="M5.0 12.2 L5.6 9.5 L11.9 3.2 L14.1 5.4 L7.8 11.7 Z" fill="#7a7e96"/><path d="M12.7 2.4 L13.9 1.2 L16.1 3.4 L14.9 4.6 Z" fill="#7a7e96"/></g></svg>
<div class="abs" style="left:99px;top:172.2px;width:24px;height:24.5px;background:#f3f6f9;border-radius:4px"></div>
<svg class="abs" style="left:99px;top:172.2px" width="24" height="25" viewBox="0 0 24 25"><g transform="translate(2,2)"><path d="M2.7 9.3 Q9.9 -0.2 17.1 9.3 Q9.9 18.8 2.7 9.3 Z" fill="#7a7e96"/><circle cx="9.9" cy="9.3" r="3.5" fill="#f3f6f9"/><circle cx="9.9" cy="9.3" r="2.3" fill="#7a7e96"/><circle cx="9.0" cy="8.3" r="0.8" fill="#f3f6f9"/></g></svg>
<div class="abs" style="left:134px;top:172.2px;width:24px;height:24.5px;background:#f3f6f9;border-radius:4px"></div>
<svg class="abs" style="left:134px;top:172.2px" width="24" height="25" viewBox="0 0 24 25"><g transform="translate(2,2)"><ellipse cx="12.4" cy="11.9" rx="4.6" ry="3.7" fill="#7a7e96"/><path d="M15 14 L17.1 15.9 L12.8 15.2 Z" fill="#7a7e96"/><ellipse cx="8.2" cy="8.4" rx="5.7" ry="4.4" fill="#f3f6f9"/><ellipse cx="8.2" cy="8.4" rx="4.9" ry="3.6" fill="#7a7e96"/><path d="M4.6 10.6 L3.3 12.9 L6.6 11.7 Z" fill="#7a7e96"/></g></svg>
<div class="abs" style="left:64px;top:201.6px;width:24px;height:24.5px;background:#f3f6f9;border-radius:4px"></div>
<svg class="abs" style="left:64px;top:201.6px" width="24" height="25" viewBox="0 0 24 25"><g transform="translate(1,1.6)"><path d="M10.5 4.8 L14.7 8.8 H12 V13.2 Q10.5 14.3 9 13.2 V8.8 H6.3 Z" fill="#7a7e96"/><path d="M4.5 12.9 H8.6 Q10.5 15 12.4 12.9 H16.6 V16.8 H4.5 Z" fill="#7a7e96"/></g></svg>
<div class="abs" style="left:99px;top:201.6px;width:24px;height:24.5px;background:#f3f6f9;border-radius:4px"></div>
<svg class="abs" style="left:99px;top:201.6px" width="24" height="25" viewBox="0 0 24 25"><g transform="translate(2,1.6)"><path d="M3.8 5.6 L5 6.8 L7.2 4.3 M3.8 9.4 L5 10.6 L7.2 8.1" fill="none" stroke="#7a7e96" stroke-width="1.3"/><circle cx="5.2" cy="13.9" r="1.05" fill="#7a7e96"/><path d="M8.2 5.9 H16.3 M8.2 9.8 H16.3 M8.2 13.9 H16.3" stroke="#7a7e96" stroke-width="1.6"/></g></svg>
<div class="abs" style="left:134px;top:201.6px;width:24px;height:24.5px;background:#f3f6f9;border-radius:4px"></div>
<svg class="abs" style="left:134px;top:201.6px" width="24" height="25" viewBox="0 0 24 25"><g transform="translate(2,1.6)"><path d="M10.25 3.70 L12.07 8.09 L16.81 8.47 L13.20 11.56 L14.31 16.18 L10.25 13.70 L6.19 16.18 L7.30 11.56 L3.69 8.47 L8.43 8.09 Z" fill="#7a7e96" stroke="#7a7e96" stroke-width="0.6" stroke-linejoin="round"/></g></svg>
<div class="t" style="left:170.8px;top:194.77px;font-size:10.2px;color:#3699ff;font-weight:bold;letter-spacing:0.004px;">Lendingwise Shiela</div>
<div class="t" style="left:305.2px;top:193.23px;font-size:10.6px;color:#575b70;letter-spacing:0.333px;">03/21/2023</div>
<div class="abs" style="left:412px;top:187.4px;width:25px;height:24px;background:#f3f6f9;border-radius:4px"></div>
<svg class="abs" style="left:417px;top:191.2px" width="16" height="16" viewBox="0 0 16 16"><path d="M6.93 12.95 A5.5 5.5 0 0 1 4.31 3.17" fill="none" stroke="#1bc5bd" stroke-width="1.3"/><path d="M6.77 1.69 L3.17 1.45 L5.17 4.92 Z" fill="#1bc5bd"/><path d="M8.47 2.05 A5.5 5.5 0 0 1 11.09 11.83" fill="none" stroke="#1bc5bd" stroke-width="1.3"/><path d="M8.63 13.31 L12.23 13.55 L10.23 10.08 Z" fill="#1bc5bd"/></svg>
<div class="t" style="left:444.5px;top:186.63px;font-size:10.6px;color:#575b70;transform:scaleX(0.976);transform-origin:0 0;">Lead</div>
<div class="t" style="left:638.2px;top:193.23px;font-size:10.6px;color:#575b70;letter-spacing:0.324px;">Corporate</div>
<div class="t" style="left:814.8px;top:193.23px;font-size:10.6px;color:#575b70;transform:scaleX(0.953);transform-origin:0 0;">Fix and Flip</div>
<div class="t" style="left:935.1px;top:193.23px;font-size:10.6px;color:#575b70;letter-spacing:0.107px;">Purchase</div>
<div class="t" style="left:11.8px;top:253.13px;font-size:10.6px;color:#3f4254;">4</div>
<svg class="abs" style="left:31px;top:255.3px" width="22" height="17" viewBox="0 0 22 17"><path d="M2.2 3.2 Q2.2 2.2 3.2 2.2 H8.3 L10.6 4.5 H18.8 Q19.8 4.5 19.8 5.5 V14.2 Q19.8 15.2 18.8 15.2 H3.2 Q2.2 15.2 2.2 14.2 Z" fill="none" stroke="#1bc5bd" stroke-width="1.9" stroke-linejoin="round"/></svg>
<div class="abs" style="left:64px;top:231.3px;width:24px;height:24.5px;background:#f3f6f9;border-radius:4px"></div>
<svg class="abs" style="left:64px;top:231.3px" width="24" height="25" viewBox="0 0 24 25"><g transform="translate(3,4)"><path d="M9.9 3.35 H2.25 V12.95 H11.95 V8.7" fill="none" stroke="#7a7e96" stroke-width="1.5"/><path d="M5.0 12.2 L5.6 9.5 L11.9 3.2 L14.1 5.4 L7.8 11.7 Z" fill="#7a7e96"/><path d="M12.7 2.4 L13.9 1.2 L16.1 3.4 L14.9 4.6 Z" fill="#7a7e96"/></g></svg>
<div class="abs" style="left:99px;top:231.3px;width:24px;height:24.5px;background:#f3f6f9;border-radius:4px"></div>
<svg class="abs" style="left:99px;top:231.3px" width="24" height="25" viewBox="0 0 24 25"><g transform="translate(2,2)"><path d="M2.7 9.3 Q9.9 -0.2 17.1 9.3 Q9.9 18.8 2.7 9.3 Z" fill="#7a7e96"/><circle cx="9.9" cy="9.3" r="3.5" fill="#f3f6f9"/><circle cx="9.9" cy="9.3" r="2.3" fill="#7a7e96"/><circle cx="9.0" cy="8.3" r="0.8" fill="#f3f6f9"/></g></svg>
<div class="abs" style="left:134px;top:231.3px;width:24px;height:24.5px;background:#f3f6f9;border-radius:4px"></div>
<svg class="abs" style="left:134px;top:231.3px" width="24" height="25" viewBox="0 0 24 25"><g transform="translate(2,2)"><ellipse cx="12.4" cy="11.9" rx="4.6" ry="3.7" fill="#7a7e96"/><path d="M15 14 L17.1 15.9 L12.8 15.2 Z" fill="#7a7e96"/><ellipse cx="8.2" cy="8.4" rx="5.7" ry="4.4" fill="#f3f6f9"/><ellipse cx="8.2" cy="8.4" rx="4.9" ry="3.6" fill="#7a7e96"/><path d="M4.6 10.6 L3.3 12.9 L6.6 11.7 Z" fill="#7a7e96"/></g></svg>
<div class="abs" style="left:64px;top:260.7px;width:24px;height:24.5px;background:#f3f6f9;border-radius:4px"></div>
<svg class="abs" style="left:64px;top:260.7px" width="24" height="25" viewBox="0 0 24 25"><g transform="translate(1,1.6)"><path d="M10.5 4.8 L14.7 8.8 H12 V13.2 Q10.5 14.3 9 13.2 V8.8 H6.3 Z" fill="#7a7e96"/><path d="M4.5 12.9 H8.6 Q10.5 15 12.4 12.9 H16.6 V16.8 H4.5 Z" fill="#7a7e96"/></g></svg>
<div class="abs" style="left:99px;top:260.7px;width:24px;height:24.5px;background:#f3f6f9;border-radius:4px"></div>
<svg class="abs" style="left:99px;top:260.7px" width="24" height="25" viewBox="0 0 24 25"><g transform="translate(2,1.6)"><path d="M3.8 5.6 L5 6.8 L7.2 4.3 M3.8 9.4 L5 10.6 L7.2 8.1" fill="none" stroke="#7a7e96" stroke-width="1.3"/><circle cx="5.2" cy="13.9" r="1.05" fill="#7a7e96"/><path d="M8.2 5.9 H16.3 M8.2 9.8 H16.3 M8.2 13.9 H16.3" stroke="#7a7e96" stroke-width="1.6"/></g></svg>
<div class="abs" style="left:134px;top:260.7px;width:24px;height:24.5px;background:#f3f6f9;border-radius:4px"></div>
<svg class="abs" style="left:134px;top:260.7px" width="24" height="25" viewBox="0 0 24 25"><g transform="translate(2,1.6)"><path d="M10.25 3.70 L12.07 8.09 L16.81 8.47 L13.20 11.56 L14.31 16.18 L10.25 13.70 L6.19 16.18 L7.30 11.56 L3.69 8.47 L8.43 8.09 Z" fill="#7a7e96" stroke="#7a7e96" stroke-width="0.6" stroke-linejoin="round"/></g></svg>
<div class="t" style="left:170.8px;top:253.87px;font-size:10.2px;color:#3699ff;font-weight:bold;letter-spacing:0.002px;">Johnson Jon</div>
<div class="t" style="left:305.2px;top:252.33px;font-size:10.6px;color:#575b70;letter-spacing:0.333px;">03/03/2023</div>
<div class="abs" style="left:412px;top:246.5px;width:25px;height:24px;background:#f3f6f9;border-radius:4px"></div>
<svg class="abs" style="left:417px;top:250.3px" width="16" height="16" viewBox="0 0 16 16"><path d="M6.93 12.95 A5.5 5.5 0 0 1 4.31 3.17" fill="none" stroke="#1bc5bd" stroke-width="1.3"/><path d="M6.77 1.69 L3.17 1.45 L5.17 4.92 Z" fill="#1bc5bd"/><path d="M8.47 2.05 A5.5 5.5 0 0 1 11.09 11.83" fill="none" stroke="#1bc5bd" stroke-width="1.3"/><path d="M8.63 13.31 L12.23 13.55 L10.23 10.08 Z" fill="#1bc5bd"/></svg>
<div class="t" style="left:444.5px;top:245.73px;font-size:10.6px;color:#575b70;letter-spacing:0.408px;">Completed</div>
<div class="t" style="left:444.5px;top:260.53px;font-size:10.6px;color:#575b70;letter-spacing:0.428px;">App</div>
<div class="t" style="left:506.0px;top:230.93px;font-size:10.6px;color:#575b70;transform:scaleX(0.974);transform-origin:0 0;">OskarBroker</div>
<div class="t" style="left:506.0px;top:245.23px;font-size:10.6px;color:#575b70;letter-spacing:0.071px;">BrokerLastename</div>
<div class="t" style="left:506.0px;top:260.37px;font-size:10.2px;color:#3f4254;font-weight:bold;letter-spacing:-0.116px;">Email:</div>
<div class="t" style="left:506.0px;top:274.93px;font-size:10.6px;color:#3699ff;letter-spacing:0.227px;">oskarbroker@gmail.com</div>
<div class="t" style="left:638.2px;top:252.33px;font-size:10.6px;color:#575b70;letter-spacing:0.324px;">Corporate</div>
<div class="t" style="left:814.8px;top:252.33px;font-size:10.6px;color:#575b70;transform:scaleX(0.783);transform-origin:0 0;">BRRRR</div>
<div class="t" style="left:935.1px;top:252.33px;font-size:10.6px;color:#575b70;letter-spacing:0.107px;">Purchase</div>
<div class="t" style="left:11.8px;top:312.23px;font-size:10.6px;color:#3f4254;">5</div>
<svg class="abs" style="left:31px;top:314.4px" width="22" height="17" viewBox="0 0 22 17"><path d="M2.2 3.2 Q2.2 2.2 3.2 2.2 H8.3 L10.6 4.5 H18.8 Q19.8 4.5 19.8 5.5 V14.2 Q19.8 15.2 18.8 15.2 H3.2 Q2.2 15.2 2.2 14.2 Z" fill="none" stroke="#1bc5bd" stroke-width="1.9" stroke-linejoin="round"/></svg>
<div class="abs" style="left:64px;top:290.4px;width:24px;height:24.5px;background:#f3f6f9;border-radius:4px"></div>
<svg class="abs" style="left:64px;top:290.4px" width="24" height="25" viewBox="0 0 24 25"><g transform="translate(3,4)"><path d="M9.9 3.35 H2.25 V12.95 H11.95 V8.7" fill="none" stroke="#7a7e96" stroke-width="1.5"/><path d="M5.0 12.2 L5.6 9.5 L11.9 3.2 L14.1 5.4 L7.8 11.7 Z" fill="#7a7e96"/><path d="M12.7 2.4 L13.9 1.2 L16.1 3.4 L14.9 4.6 Z" fill="#7a7e96"/></g></svg>
<div class="abs" style="left:99px;top:290.4px;width:24px;height:24.5px;background:#f3f6f9;border-radius:4px"></div>
<svg class="abs" style="left:99px;top:290.4px" width="24" height="25" viewBox="0 0 24 25"><g transform="translate(2,2)"><path d="M2.7 9.3 Q9.9 -0.2 17.1 9.3 Q9.9 18.8 2.7 9.3 Z" fill="#7a7e96"/><circle cx="9.9" cy="9.3" r="3.5" fill="#f3f6f9"/><circle cx="9.9" cy="9.3" r="2.3" fill="#7a7e96"/><circle cx="9.0" cy="8.3" r="0.8" fill="#f3f6f9"/></g></svg>
<div class="abs" style="left:134px;top:290.4px;width:24px;height:24.5px;background:#f3f6f9;border-radius:4px"></div>
<svg class="abs" style="left:134px;top:290.4px" width="24" height="25" viewBox="0 0 24 25"><g transform="translate(2,2)"><ellipse cx="12.4" cy="11.9" rx="4.6" ry="3.7" fill="#7a7e96"/><path d="M15 14 L17.1 15.9 L12.8 15.2 Z" fill="#7a7e96"/><ellipse cx="8.2" cy="8.4" rx="5.7" ry="4.4" fill="#f3f6f9"/><ellipse cx="8.2" cy="8.4" rx="4.9" ry="3.6" fill="#7a7e96"/><path d="M4.6 10.6 L3.3 12.9 L6.6 11.7 Z" fill="#7a7e96"/></g></svg>
<div class="abs" style="left:64px;top:319.8px;width:24px;height:24.5px;background:#f3f6f9;border-radius:4px"></div>
<svg class="abs" style="left:64px;top:319.8px" width="24" height="25" viewBox="0 0 24 25"><g transform="translate(1,1.6)"><path d="M10.5 4.8 L14.7 8.8 H12 V13.2 Q10.5 14.3 9 13.2 V8.8 H6.3 Z" fill="#7a7e96"/><path d="M4.5 12.9 H8.6 Q10.5 15 12.4 12.9 H16.6 V16.8 H4.5 Z" fill="#7a7e96"/></g></svg>
<div class="abs" style="left:99px;top:319.8px;width:24px;height:24.5px;background:#f3f6f9;border-radius:4px"></div>
<svg class="abs" style="left:99px;top:319.8px" width="24" height="25" viewBox="0 0 24 25"><g transform="translate(2,1.6)"><path d="M3.8 5.6 L5 6.8 L7.2 4.3 M3.8 9.4 L5 10.6 L7.2 8.1" fill="none" stroke="#7a7e96" stroke-width="1.3"/><circle cx="5.2" cy="13.9" r="1.05" fill="#7a7e96"/><path d="M8.2 5.9 H16.3 M8.2 9.8 H16.3 M8.2 13.9 H16.3" stroke="#7a7e96" stroke-width="1.6"/></g></svg>
<div class="abs" style="left:134px;top:319.8px;width:24px;height:24.5px;background:#f3f6f9;border-radius:4px"></div>
<svg class="abs" style="left:134px;top:319.8px" width="24" height="25" viewBox="0 0 24 25"><g transform="translate(2,1.6)"><path d="M10.25 3.70 L12.07 8.09 L16.81 8.47 L13.20 11.56 L14.31 16.18 L10.25 13.70 L6.19 16.18 L7.30 11.56 L3.69 8.47 L8.43 8.09 Z" fill="#7a7e96" stroke="#7a7e96" stroke-width="0.6" stroke-linejoin="round"/></g></svg>
<div class="t" style="left:170.8px;top:312.97px;font-size:10.2px;color:#3699ff;font-weight:bold;letter-spacing:0.037px;">Lastthree Firstthree</div>
<div class="t" style="left:305.2px;top:311.43px;font-size:10.6px;color:#575b70;letter-spacing:0.333px;">03/03/2023</div>
<div class="abs" style="left:412px;top:305.6px;width:25px;height:24px;background:#f3f6f9;border-radius:4px"></div>
<svg class="abs" style="left:417px;top:309.4px" width="16" height="16" viewBox="0 0 16 16"><path d="M6.93 12.95 A5.5 5.5 0 0 1 4.31 3.17" fill="none" stroke="#1bc5bd" stroke-width="1.3"/><path d="M6.77 1.69 L3.17 1.45 L5.17 4.92 Z" fill="#1bc5bd"/><path d="M8.47 2.05 A5.5 5.5 0 0 1 11.09 11.83" fill="none" stroke="#1bc5bd" stroke-width="1.3"/><path d="M8.63 13.31 L12.23 13.55 L10.23 10.08 Z" fill="#1bc5bd"/></svg>
<div class="t" style="left:444.5px;top:304.83px;font-size:10.6px;color:#575b70;transform:scaleX(0.976);transform-origin:0 0;">Lead</div>
<div class="t" style="left:638.2px;top:311.43px;font-size:10.6px;color:#575b70;letter-spacing:0.324px;">Corporate</div>
<div class="t" style="left:715.9px;top:311.43px;font-size:10.6px;color:#575b70;letter-spacing:0.355px;">asdafsadfsadf</div>
<div class="t" style="left:814.8px;top:311.43px;font-size:10.6px;color:#575b70;letter-spacing:0.085px;">Blanket/Portfolio Loan</div>
<div class="t" style="left:935.1px;top:311.43px;font-size:10.6px;color:#575b70;letter-spacing:0.107px;">Purchase</div>
<div class="t" style="left:11.8px;top:371.33px;font-size:10.6px;color:#3f4254;">6</div>
<svg class="abs" style="left:31px;top:373.5px" width="22" height="17" viewBox="0 0 22 17"><path d="M2.2 3.2 Q2.2 2.2 3.2 2.2 H8.3 L10.6 4.5 H18.8 Q19.8 4.5 19.8 5.5 V14.2 Q19.8 15.2 18.8 15.2 H3.2 Q2.2 15.2 2.2 14.2 Z" fill="none" stroke="#1bc5bd" stroke-width="1.9" stroke-linejoin="round"/></svg>
<div class="abs" style="left:64px;top:349.5px;width:24px;height:24.5px;background:#f3f6f9;border-radius:4px"></div>
<svg class="abs" style="left:64px;top:349.5px" width="24" height="25" viewBox="0 0 24 25"><g transform="translate(3,4)"><path d="M9.9 3.35 H2.25 V12.95 H11.95 V8.7" fill="none" stroke="#7a7e96" stroke-width="1.5"/><path d="M5.0 12.2 L5.6 9.5 L11.9 3.2 L14.1 5.4 L7.8 11.7 Z" fill="#7a7e96"/><path d="M12.7 2.4 L13.9 1.2 L16.1 3.4 L14.9 4.6 Z" fill="#7a7e96"/></g></svg>
<div class="abs" style="left:99px;top:349.5px;width:24px;height:24.5px;background:#f3f6f9;border-radius:4px"></div>
<svg class="abs" style="left:99px;top:349.5px" width="24" height="25" viewBox="0 0 24 25"><g transform="translate(2,2)"><path d="M2.7 9.3 Q9.9 -0.2 17.1 9.3 Q9.9 18.8 2.7 9.3 Z" fill="#7a7e96"/><circle cx="9.9" cy="9.3" r="3.5" fill="#f3f6f9"/><circle cx="9.9" cy="9.3" r="2.3" fill="#7a7e96"/><circle cx="9.0" cy="8.3" r="0.8" fill="#f3f6f9"/></g></svg>
<div class="abs" style="left:134px;top:349.5px;width:24px;height:24.5px;background:#f3f6f9;border-radius:4px"></div>
<svg class="abs" style="left:134px;top:349.5px" width="24" height="25" viewBox="0 0 24 25"><g transform="translate(2,2)"><ellipse cx="12.4" cy="11.9" rx="4.6" ry="3.7" fill="#7a7e96"/><path d="M15 14 L17.1 15.9 L12.8 15.2 Z" fill="#7a7e96"/><ellipse cx="8.2" cy="8.4" rx="5.7" ry="4.4" fill="#f3f6f9"/><ellipse cx="8.2" cy="8.4" rx="4.9" ry="3.6" fill="#7a7e96"/><path d="M4.6 10.6 L3.3 12.9 L6.6 11.7 Z" fill="#7a7e96"/></g></svg>
<div class="abs" style="left:64px;top:378.9px;width:24px;height:24.5px;background:#f3f6f9;border-radius:4px"></div>
<svg class="abs" style="left:64px;top:378.9px" width="24" height="25" viewBox="0 0 24 25"><g transform="translate(1,1.6)"><path d="M10.5 4.8 L14.7 8.8 H12 V13.2 Q10.5 14.3 9 13.2 V8.8 H6.3 Z" fill="#7a7e96"/><path d="M4.5 12.9 H8.6 Q10.5 15 12.4 12.9 H16.6 V16.8 H4.5 Z" fill="#7a7e96"/></g></svg>
<div class="abs" style="left:99px;top:378.9px;width:24px;height:24.5px;background:#f3f6f9;border-radius:4px"></div>
<svg class="abs" style="left:99px;top:378.9px" width="24" height="25" viewBox="0 0 24 25"><g transform="translate(2,1.6)"><path d="M3.8 5.6 L5 6.8 L7.2 4.3 M3.8 9.4 L5 10.6 L7.2 8.1" fill="none" stroke="#7a7e96" stroke-width="1.3"/><circle cx="5.2" cy="13.9" r="1.05" fill="#7a7e96"/><path d="M8.2 5.9 H16.3 M8.2 9.8 H16.3 M8.2 13.9 H16.3" stroke="#7a7e96" stroke-width="1.6"/></g></svg>
<div class="abs" style="left:134px;top:378.9px;width:24px;height:24.5px;background:#f3f6f9;border-radius:4px"></div>
<svg class="abs" style="left:134px;top:378.9px" width="24" height="25" viewBox="0 0 24 25"><g transform="translate(2,1.6)"><path d="M10.25 3.70 L12.07 8.09 L16.81 8.47 L13.20 11.56 L14.31 16.18 L10.25 13.70 L6.19 16.18 L7.30 11.56 L3.69 8.47 L8.43 8.09 Z" fill="#7a7e96" stroke="#7a7e96" stroke-width="0.6" stroke-linejoin="round"/></g></svg>
<div class="t" style="left:170.8px;top:372.07px;font-size:10.2px;color:#3699ff;font-weight:bold;letter-spacing:-0.061px;">Lasttwo Firsttwo</div>
<div class="t" style="left:305.2px;top:370.53px;font-size:10.6px;color:#575b70;letter-spacing:0.333px;">03/03/2023</div>
<div class="abs" style="left:412px;top:364.7px;width:25px;height:24px;background:#f3f6f9;border-radius:4px"></div>
<svg class="abs" style="left:417px;top:368.5px" width="16" height="16" viewBox="0 0 16 16"><path d="M6.93 12.95 A5.5 5.5 0 0 1 4.31 3.17" fill="none" stroke="#1bc5bd" stroke-width="1.3"/><path d="M6.77 1.69 L3.17 1.45 L5.17 4.92 Z" fill="#1bc5bd"/><path d="M8.47 2.05 A5.5 5.5 0 0 1 11.09 11.83" fill="none" stroke="#1bc5bd" stroke-width="1.3"/><path d="M8.63 13.31 L12.23 13.55 L10.23 10.08 Z" fill="#1bc5bd"/></svg>
<div class="t" style="left:444.5px;top:363.93px;font-size:10.6px;color:#575b70;transform:scaleX(0.976);transform-origin:0 0;">Lead</div>
<div class="t" style="left:638.2px;top:370.53px;font-size:10.6px;color:#575b70;letter-spacing:0.324px;">Corporate</div>
<div class="t" style="left:814.8px;top:370.53px;font-size:10.6px;color:#575b70;transform:scaleX(0.783);transform-origin:0 0;">BRRRR</div>
<div class="t" style="left:935.1px;top:370.53px;font-size:10.6px;color:#575b70;letter-spacing:0.107px;">Purchase</div>
<div class="t" style="left:11.8px;top:430.43px;font-size:10.6px;color:#3f4254;">7</div>
<svg class="abs" style="left:31px;top:432.6px" width="22" height="17" viewBox="0 0 22 17"><path d="M2.2 3.2 Q2.2 2.2 3.2 2.2 H8.3 L10.6 4.5 H18.8 Q19.8 4.5 19.8 5.5 V14.2 Q19.8 15.2 18.8 15.2 H3.2 Q2.2 15.2 2.2 14.2 Z" fill="none" stroke="#1bc5bd" stroke-width="1.9" stroke-linejoin="round"/></svg>
<div class="abs" style="left:64px;top:408.6px;width:24px;height:24.5px;background:#f3f6f9;border-radius:4px"></div>
<svg class="abs" style="left:64px;top:408.6px" width="24" height="25" viewBox="0 0 24 25"><g transform="translate(3,4)"><path d="M9.9 3.35 H2.25 V12.95 H11.95 V8.7" fill="none" stroke="#7a7e96" stroke-width="1.5"/><path d="M5.0 12.2 L5.6 9.5 L11.9 3.2 L14.1 5.4 L7.8 11.7 Z" fill="#7a7e96"/><path d="M12.7 2.4 L13.9 1.2 L16.1 3.4 L14.9 4.6 Z" fill="#7a7e96"/></g></svg>
<div class="abs" style="left:99px;top:408.6px;width:24px;height:24.5px;background:#f3f6f9;border-radius:4px"></div>
<svg class="abs" style="left:99px;top:408.6px" width="24" height="25" viewBox="0 0 24 25"><g transform="translate(2,2)"><path d="M2.7 9.3 Q9.9 -0.2 17.1 9.3 Q9.9 18.8 2.7 9.3 Z" fill="#7a7e96"/><circle cx="9.9" cy="9.3" r="3.5" fill="#f3f6f9"/><circle cx="9.9" cy="9.3" r="2.3" fill="#7a7e96"/><circle cx="9.0" cy="8.3" r="0.8" fill="#f3f6f9"/></g></svg>
<div class="abs" style="left:134px;top:408.6px;width:24px;height:24.5px;background:#f3f6f9;border-radius:4px"></div>
<svg class="abs" style="left:134px;top:408.6px" width="24" height="25" viewBox="0 0 24 25"><g transform="translate(2,2)"><ellipse cx="12.4" cy="11.9" rx="4.6" ry="3.7" fill="#7a7e96"/><path d="M15 14 L17.1 15.9 L12.8 15.2 Z" fill="#7a7e96"/><ellipse cx="8.2" cy="8.4" rx="5.7" ry="4.4" fill="#f3f6f9"/><ellipse cx="8.2" cy="8.4" rx="4.9" ry="3.6" fill="#7a7e96"/><path d="M4.6 10.6 L3.3 12.9 L6.6 11.7 Z" fill="#7a7e96"/></g></svg>
<div class="abs" style="left:64px;top:438.0px;width:24px;height:24.5px;background:#f3f6f9;border-radius:4px"></div>
<svg class="abs" style="left:64px;top:438.0px" width="24" height="25" viewBox="0 0 24 25"><g transform="translate(1,1.6)"><path d="M10.5 4.8 L14.7 8.8 H12 V13.2 Q10.5 14.3 9 13.2 V8.8 H6.3 Z" fill="#7a7e96"/><path d="M4.5 12.9 H8.6 Q10.5 15 12.4 12.9 H16.6 V16.8 H4.5 Z" fill="#7a7e96"/></g></svg>
<div class="abs" style="left:99px;top:438.0px;width:24px;height:24.5px;background:#f3f6f9;border-radius:4px"></div>
<svg class="abs" style="left:99px;top:438.0px" width="24" height="25" viewBox="0 0 24 25"><g transform="translate(2,1.6)"><path d="M3.8 5.6 L5 6.8 L7.2 4.3 M3.8 9.4 L5 10.6 L7.2 8.1" fill="none" stroke="#7a7e96" stroke-width="1.3"/><circle cx="5.2" cy="13.9" r="1.05" fill="#7a7e96"/><path d="M8.2 5.9 H16.3 M8.2 9.8 H16.3 M8.2 13.9 H16.3" stroke="#7a7e96" stroke-width="1.6"/></g></svg>
<div class="abs" style="left:134px;top:438.0px;width:24px;height:24.5px;background:#f3f6f9;border-radius:4px"></div>
<svg class="abs" style="left:134px;top:438.0px" width="24" height="25" viewBox="0 0 24 25"><g transform="translate(2,1.6)"><path d="M10.25 3.70 L12.07 8.09 L16.81 8.47 L13.20 11.56 L14.31 16.18 L10.25 13.70 L6.19 16.18 L7.30 11.56 L3.69 8.47 L8.43 8.09 Z" fill="#7a7e96" stroke="#7a7e96" stroke-width="0.6" stroke-linejoin="round"/></g></svg>
<div class="t" style="left:170.8px;top:431.17px;font-size:10.2px;color:#3699ff;font-weight:bold;transform:scaleX(0.957);transform-origin:0 0;">Last First</div>
<div class="t" style="left:305.2px;top:429.63px;font-size:10.6px;color:#575b70;letter-spacing:0.333px;">03/03/2023</div>
<div class="abs" style="left:412px;top:423.8px;width:25px;height:24px;background:#f3f6f9;border-radius:4px"></div>
<svg class="abs" style="left:417px;top:427.6px" width="16" height="16" viewBox="0 0 16 16"><path d="M6.93 12.95 A5.5 5.5 0 0 1 4.31 3.17" fill="none" stroke="#1bc5bd" stroke-width="1.3"/><path d="M6.77 1.69 L3.17 1.45 L5.17 4.92 Z" fill="#1bc5bd"/><path d="M8.47 2.05 A5.5 5.5 0 0 1 11.09 11.83" fill="none" stroke="#1bc5bd" stroke-width="1.3"/><path d="M8.63 13.31 L12.23 13.55 L10.23 10.08 Z" fill="#1bc5bd"/></svg>
<div class="t" style="left:444.5px;top:423.03px;font-size:10.6px;color:#575b70;transform:scaleX(0.976);transform-origin:0 0;">Lead</div>
<div class="t" style="left:638.2px;top:429.63px;font-size:10.6px;color:#575b70;letter-spacing:0.324px;">Corporate</div>
<div class="t" style="left:814.8px;top:429.63px;font-size:10.6px;color:#575b70;transform:scaleX(0.953);transform-origin:0 0;">Fix and Flip</div>
<div class="t" style="left:935.1px;top:429.63px;font-size:10.6px;color:#575b70;letter-spacing:0.107px;">Purchase</div>
<div class="t" style="left:11.8px;top:489.53px;font-size:10.6px;color:#3f4254;">8</div>
<svg class="abs" style="left:31px;top:491.7px" width="22" height="17" viewBox="0 0 22 17"><path d="M2.2 3.2 Q2.2 2.2 3.2 2.2 H8.3 L10.6 4.5 H18.8 Q19.8 4.5 19.8 5.5 V14.2 Q19.8 15.2 18.8 15.2 H3.2 Q2.2 15.2 2.2 14.2 Z" fill="none" stroke="#1bc5bd" stroke-width="1.9" stroke-linejoin="round"/></svg>
<div class="abs" style="left:64px;top:467.7px;width:24px;height:24.5px;background:#f3f6f9;border-radius:4px"></div>
<svg class="abs" style="left:64px;top:467.7px" width="24" height="25" viewBox="0 0 24 25"><g transform="translate(3,4)"><path d="M9.9 3.35 H2.25 V12.95 H11.95 V8.7" fill="none" stroke="#7a7e96" stroke-width="1.5"/><path d="M5.0 12.2 L5.6 9.5 L11.9 3.2 L14.1 5.4 L7.8 11.7 Z" fill="#7a7e96"/><path d="M12.7 2.4 L13.9 1.2 L16.1 3.4 L14.9 4.6 Z" fill="#7a7e96"/></g></svg>
<div class="abs" style="left:99px;top:467.7px;width:24px;height:24.5px;background:#f3f6f9;border-radius:4px"></div>
<svg class="abs" style="left:99px;top:467.7px" width="24" height="25" viewBox="0 0 24 25"><g transform="translate(2,2)"><path d="M2.7 9.3 Q9.9 -0.2 17.1 9.3 Q9.9 18.8 2.7 9.3 Z" fill="#7a7e96"/><circle cx="9.9" cy="9.3" r="3.5" fill="#f3f6f9"/><circle cx="9.9" cy="9.3" r="2.3" fill="#7a7e96"/><circle cx="9.0" cy="8.3" r="0.8" fill="#f3f6f9"/></g></svg>
<div class="abs" style="left:134px;top:467.7px;width:24px;height:24.5px;background:#f3f6f9;border-radius:4px"></div>
<svg class="abs" style="left:134px;top:467.7px" width="24" height="25" viewBox="0 0 24 25"><g transform="translate(2,2)"><ellipse cx="12.4" cy="11.9" rx="4.6" ry="3.7" fill="#7a7e96"/><path d="M15 14 L17.1 15.9 L12.8 15.2 Z" fill="#7a7e96"/><ellipse cx="8.2" cy="8.4" rx="5.7" ry="4.4" fill="#f3f6f9"/><ellipse cx="8.2" cy="8.4" rx="4.9" ry="3.6" fill="#7a7e96"/><path d="M4.6 10.6 L3.3 12.9 L6.6 11.7 Z" fill="#7a7e96"/></g></svg>
<div class="abs" style="left:64px;top:497.1px;width:24px;height:24.5px;background:#f3f6f9;border-radius:4px"></div>
<svg class="abs" style="left:64px;top:497.1px" width="24" height="25" viewBox="0 0 24 25"><g transform="translate(1,1.6)"><path d="M10.5 4.8 L14.7 8.8 H12 V13.2 Q10.5 14.3 9 13.2 V8.8 H6.3 Z" fill="#7a7e96"/><path d="M4.5 12.9 H8.6 Q10.5 15 12.4 12.9 H16.6 V16.8 H4.5 Z" fill="#7a7e96"/></g></svg>
<div class="abs" style="left:99px;top:497.1px;width:24px;height:24.5px;background:#f3f6f9;border-radius:4px"></div>
<svg class="abs" style="left:99px;top:497.1px" width="24" height="25" viewBox="0 0 24 25"><g transform="translate(2,1.6)"><path d="M3.8 5.6 L5 6.8 L7.2 4.3 M3.8 9.4 L5 10.6 L7.2 8.1" fill="none" stroke="#7a7e96" stroke-width="1.3"/><circle cx="5.2" cy="13.9" r="1.05" fill="#7a7e96"/><path d="M8.2 5.9 H16.3 M8.2 9.8 H16.3 M8.2 13.9 H16.3" stroke="#7a7e96" stroke-width="1.6"/></g></svg>
<div class="abs" style="left:134px;top:497.1px;width:24px;height:24.5px;background:#f3f6f9;border-radius:4px"></div>
<svg class="abs" style="left:134px;top:497.1px" width="24" height="25" viewBox="0 0 24 25"><g transform="translate(2,1.6)"><path d="M10.25 3.70 L12.07 8.09 L16.81 8.47 L13.20 11.56 L14.31 16.18 L10.25 13.70 L6.19 16.18 L7.30 11.56 L3.69 8.47 L8.43 8.09 Z" fill="#7a7e96" stroke="#7a7e96" stroke-width="0.6" stroke-linejoin="round"/></g></svg>
<div class="t" style="left:170.8px;top:474.97px;font-size:10.2px;color:#3699ff;font-weight:bold;transform:scaleX(0.947);transform-origin:0 0;">Lin Frank</div>
<div class="t" style="left:170.8px;top:490.03px;font-size:10.6px;color:#575b70;transform:scaleX(0.939);transform-origin:0 0;">151 E Walnut St, Pasadena,</div>
<div class="t" style="left:170.8px;top:503.93px;font-size:10.6px;color:#575b70;transform:scaleX(0.867);transform-origin:0 0;">CA. 91103</div>
<div class="t" style="left:305.2px;top:490.03px;font-size:10.6px;color:#575b70;letter-spacing:0.356px;">09/28/2022</div>
<div class="abs" style="left:412px;top:482.9px;width:25px;height:24px;background:#f3f6f9;border-radius:4px"></div>
<svg class="abs" style="left:417px;top:486.7px" width="16" height="16" viewBox="0 0 16 16"><path d="M6.93 12.95 A5.5 5.5 0 0 1 4.31 3.17" fill="none" stroke="#1bc5bd" stroke-width="1.3"/><path d="M6.77 1.69 L3.17 1.45 L5.17 4.92 Z" fill="#1bc5bd"/><path d="M8.47 2.05 A5.5 5.5 0 0 1 11.09 11.83" fill="none" stroke="#1bc5bd" stroke-width="1.3"/><path d="M8.63 13.31 L12.23 13.55 L10.23 10.08 Z" fill="#1bc5bd"/></svg>
<div class="t" style="left:444.5px;top:482.13px;font-size:10.6px;color:#575b70;letter-spacing:-0.072px;">Pre-</div>
<div class="t" style="left:444.5px;top:496.93px;font-size:10.6px;color:#575b70;letter-spacing:0.179px;">Approved</div>
<div class="t" style="left:506.0px;top:467.33px;font-size:10.6px;color:#575b70;transform:scaleX(0.974);transform-origin:0 0;">OskarBroker</div>
<div class="t" style="left:506.0px;top:481.63px;font-size:10.6px;color:#575b70;letter-spacing:0.071px;">BrokerLastename</div>
<div class="t" style="left:506.0px;top:496.77px;font-size:10.2px;color:#3f4254;font-weight:bold;letter-spacing:-0.116px;">Email:</div>
<div class="t" style="left:506.0px;top:511.33px;font-size:10.6px;color:#3699ff;letter-spacing:0.227px;">oskarbroker@gmail.com</div>
<div class="t" style="left:638.2px;top:490.03px;font-size:10.6px;color:#575b70;letter-spacing:0.324px;">Corporate</div>
<div class="t" style="left:715.9px;top:490.03px;font-size:10.6px;color:#575b70;transform:scaleX(0.958);transform-origin:0 0;">Somehow LLC</div>
<div class="t" style="left:814.8px;top:490.03px;font-size:10.6px;color:#575b70;transform:scaleX(0.953);transform-origin:0 0;">Fix and Flip</div>
<div class="t" style="left:1066.0px;top:490.03px;font-size:10.6px;color:#575b70;letter-spacing:-0.111px;">300,000.00</div>
<div class="t" style="left:11.8px;top:548.63px;font-size:10.6px;color:#3f4254;">9</div>
<svg class="abs" style="left:31px;top:550.8px" width="22" height="17" viewBox="0 0 22 17"><path d="M2.2 3.2 Q2.2 2.2 3.2 2.2 H8.3 L10.6 4.5 H18.8 Q19.8 4.5 19.8 5.5 V14.2 Q19.8 15.2 18.8 15.2 H3.2 Q2.2 15.2 2.2 14.2 Z" fill="none" stroke="#1bc5bd" stroke-width="1.9" stroke-linejoin="round"/></svg>
<div class="abs" style="left:64px;top:526.8px;width:24px;height:24.5px;background:#f3f6f9;border-radius:4px"></div>
<svg class="abs" style="left:64px;top:526.8px" width="24" height="25" viewBox="0 0 24 25"><g transform="translate(3,4)"><path d="M9.9 3.35 H2.25 V12.95 H11.95 V8.7" fill="none" stroke="#7a7e96" stroke-width="1.5"/><path d="M5.0 12.2 L5.6 9.5 L11.9 3.2 L14.1 5.4 L7.8 11.7 Z" fill="#7a7e96"/><path d="M12.7 2.4 L13.9 1.2 L16.1 3.4 L14.9 4.6 Z" fill="#7a7e96"/></g></svg>
<div class="abs" style="left:99px;top:526.8px;width:24px;height:24.5px;background:#f3f6f9;border-radius:4px"></div>
<svg class="abs" style="left:99px;top:526.8px" width="24" height="25" viewBox="0 0 24 25"><g transform="translate(2,2)"><path d="M2.7 9.3 Q9.9 -0.2 17.1 9.3 Q9.9 18.8 2.7 9.3 Z" fill="#7a7e96"/><circle cx="9.9" cy="9.3" r="3.5" fill="#f3f6f9"/><circle cx="9.9" cy="9.3" r="2.3" fill="#7a7e96"/><circle cx="9.0" cy="8.3" r="0.8" fill="#f3f6f9"/></g></svg>
<div class="abs" style="left:134px;top:526.8px;width:24px;height:24.5px;background:#f3f6f9;border-radius:4px"></div>
<svg class="abs" style="left:134px;top:526.8px" width="24" height="25" viewBox="0 0 24 25"><g transform="translate(2,2)"><ellipse cx="12.4" cy="11.9" rx="4.6" ry="3.7" fill="#7a7e96"/><path d="M15 14 L17.1 15.9 L12.8 15.2 Z" fill="#7a7e96"/><ellipse cx="8.2" cy="8.4" rx="5.7" ry="4.4" fill="#f3f6f9"/><ellipse cx="8.2" cy="8.4" rx="4.9" ry="3.6" fill="#7a7e96"/><path d="M4.6 10.6 L3.3 12.9 L6.6 11.7 Z" fill="#7a7e96"/></g></svg>
<div class="abs" style="left:64px;top:556.2px;width:24px;height:24.5px;background:#f3f6f9;border-radius:4px"></div>
<svg class="abs" style="left:64px;top:556.2px" width="24" height="25" viewBox="0 0 24 25"><g transform="translate(1,1.6)"><path d="M10.5 4.8 L14.7 8.8 H12 V13.2 Q10.5 14.3 9 13.2 V8.8 H6.3 Z" fill="#7a7e96"/><path d="M4.5 12.9 H8.6 Q10.5 15 12.4 12.9 H16.6 V16.8 H4.5 Z" fill="#7a7e96"/></g></svg>
<div class="abs" style="left:99px;top:556.2px;width:24px;height:24.5px;background:#f3f6f9;border-radius:4px"></div>
<svg class="abs" style="left:99px;top:556.2px" width="24" height="25" viewBox="0 0 24 25"><g transform="translate(2,1.6)"><path d="M3.8 5.6 L5 6.8 L7.2 4.3 M3.8 9.4 L5 10.6 L7.2 8.1" fill="none" stroke="#7a7e96" stroke-width="1.3"/><circle cx="5.2" cy="13.9" r="1.05" fill="#7a7e96"/><path d="M8.2 5.9 H16.3 M8.2 9.8 H16.3 M8.2 13.9 H16.3" stroke="#7a7e96" stroke-width="1.6"/></g></svg>
<div class="abs" style="left:134px;top:556.2px;width:24px;height:24.5px;background:#f3f6f9;border-radius:4px"></div>
<svg class="abs" style="left:134px;top:556.2px" width="24" height="25" viewBox="0 0 24 25"><g transform="translate(2,1.6)"><path d="M10.25 3.70 L12.07 8.09 L16.81 8.47 L13.20 11.56 L14.31 16.18 L10.25 13.70 L6.19 16.18 L7.30 11.56 L3.69 8.47 L8.43 8.09 Z" fill="#7a7e96" stroke="#7a7e96" stroke-width="0.6" stroke-linejoin="round"/></g></svg>
<div class="t" style="left:170.8px;top:549.37px;font-size:10.2px;color:#3699ff;font-weight:bold;">Pleborrower Sam</div>
<div class="t" style="left:305.2px;top:547.83px;font-size:10.6px;color:#575b70;letter-spacing:0.333px;">02/27/2023</div>
<div class="abs" style="left:412px;top:542.0px;width:25px;height:24px;background:#f3f6f9;border-radius:4px"></div>
<svg class="abs" style="left:417px;top:545.8px" width="16" height="16" viewBox="0 0 16 16"><path d="M6.93 12.95 A5.5 5.5 0 0 1 4.31 3.17" fill="none" stroke="#1bc5bd" stroke-width="1.3"/><path d="M6.77 1.69 L3.17 1.45 L5.17 4.92 Z" fill="#1bc5bd"/><path d="M8.47 2.05 A5.5 5.5 0 0 1 11.09 11.83" fill="none" stroke="#1bc5bd" stroke-width="1.3"/><path d="M8.63 13.31 L12.23 13.55 L10.23 10.08 Z" fill="#1bc5bd"/></svg>
<div class="t" style="left:444.5px;top:541.23px;font-size:10.6px;color:#575b70;transform:scaleX(0.976);transform-origin:0 0;">Lead</div>
<div class="t" style="left:638.2px;top:547.83px;font-size:10.6px;color:#575b70;letter-spacing:0.324px;">Corporate</div>
<div class="t" style="left:814.8px;top:547.83px;font-size:10.6px;color:#575b70;transform:scaleX(0.953);transform-origin:0 0;">Fix and Flip</div>
<div class="t" style="left:935.1px;top:547.83px;font-size:10.6px;color:#575b70;letter-spacing:0.107px;">Purchase</div>
<div class="abs" style="left:1123px;top:52px;width:10px;height:560px;background:#f1f1f1"></div>
<div class="abs" style="left:1123px;top:52px;width:10px;height:180px;background:#a3c7e0;border-radius:5px 5px 0 0"></div>
</div>
<svg class="abs" style="left:1170px;top:95px" width="110" height="80" viewBox="1170 95 110 80">
<path d="M1183 165.5 L1257 112" stroke="#ff0a1e" stroke-width="3.6" stroke-linecap="round"/>
<path d="M1270.8 102.5 L1251.5 105.5 L1262 119.5 Z" fill="#ff0a1e"/></svg>
<div class="abs" style="left:1345px;top:328px;width:31px;height:77px;background:#19d232;border-radius:3px 0 0 3px"></div>
<div class="t" style="left:1307px;top:361px;width:110px;text-align:center;transform:rotate(-90deg);font-size:9.8px;font-weight:bold;color:#fff">Help Center</div>
<div class="abs" style="left:1334px;top:676px;width:27px;height:27px;background:#b9dafd;border-radius:4px"></div>
<svg class="abs" style="left:1341px;top:683px" width="13" height="13" viewBox="0 0 13 13"><circle cx="6.5" cy="6.5" r="6" fill="#fff"/><path d="M6.5 3 V8 M4 6 L6.5 8.7 L9 6" stroke="#b9dafd" stroke-width="1.6" fill="none"/></svg>
</body></html>
